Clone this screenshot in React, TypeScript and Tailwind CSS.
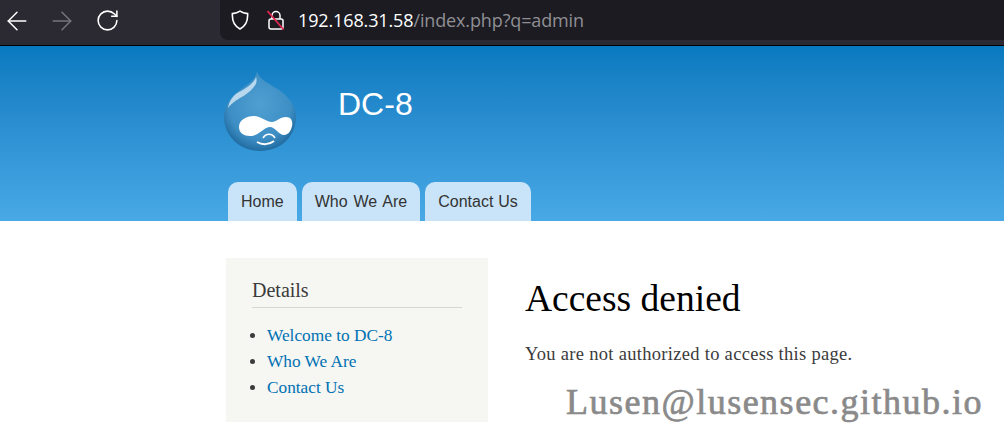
import { ArrowLeft, ArrowRight, RotateCw } from "lucide-react";

const serif = "font-['Liberation_Serif',serif]";

function DrupalLogo() {
  return (
    <svg width="72" height="82" viewBox="0 0 72 82" className="shrink-0">
      <defs>
        <radialGradient id="drop" cx="0.5" cy="0.42" r="0.62">
          <stop offset="0" stopColor="#4f9fd2" />
          <stop offset="0.7" stopColor="#3d8ec4" />
          <stop offset="1" stopColor="#1a6499" />
        </radialGradient>
      </defs>
      <path
        d="M33 1C34 7 40 11 50 17C63 24 72 35 72 47C72 67 56 81 36 81C16 81 0 66 0 47C0 33 10 24 20 17C27 12 32 8 33 1Z"
        fill="url(#drop)"
      />
      <path
        d="M32 7C30 13 23 18 15 22C8 26 5 32 4 38C10 30 18 28 25 22C31 17 34 12 32 7Z"
        fill="#d4e8f5"
        opacity="0.8"
      />
      <path
        d="M15 57C15 50 22 46 30 46C37 46 42 52 48 52C52 52 56 47 62 47C67 47 69 51 68 56C67 61 64 65 60 65C55 65 51 57 46 57C40 57 35 66 26 66C20 66 15 63 15 57Z"
        fill="#ffffff"
      />
      <path d="M39 68C42 63 48 63 51 68" fill="none" stroke="#ffffff" strokeWidth="1.6" />
      <path d="M33 72C38 75 45 75 50 71" fill="none" stroke="#ffffff" strokeWidth="2" />
    </svg>
  );
}

function LockOff() {
  return (
    <svg width="18" height="20" viewBox="0 0 18 20" fill="none">
      <path d="M5 9V5.5a4 4 0 0 1 8 0V9" stroke="#fff" strokeWidth="1.5" />
      <rect x="2" y="9" width="14" height="10" rx="2" stroke="#fff" strokeWidth="1.5" />
      <path d="M0.5 1l16 18.5" stroke="#e22850" strokeWidth="1.7" />
    </svg>
  );
}

function Shield() {
  return (
    <svg width="18" height="20" viewBox="0 0 18 20" fill="none">
      <path
        d="M9 1.2C11 2.6 14 3.4 16.6 3.6C17 10 15 16 9 19C3 16 1 10 1.4 3.6C4 3.4 7 2.6 9 1.2Z"
        stroke="#fff"
        strokeWidth="1.6"
      />
    </svg>
  );
}

export default function App() {
  return (
    <div className="relative h-[430px] w-[1004px] overflow-hidden bg-white font-['Liberation_Sans',sans-serif]">
      {/* browser toolbar */}
      <div className="flex h-[46px] items-start border-b border-black bg-[#2b2a33]">
        <div className="flex h-[41px] w-[220px] items-center pl-[2px]">
          <ArrowLeft size={30} strokeWidth={1.2} className="text-white" />
          <ArrowRight size={30} strokeWidth={1.2} className="ml-[15px] text-[#77767c]" />
          <RotateCw size={25} strokeWidth={1.5} className="ml-[18px] text-white" />
        </div>
        <div className="flex h-[40px] flex-1 items-center rounded-bl-lg bg-[#1c1b22] pl-[11px]">
          <Shield />
          <span className="ml-[18px]">
            <LockOff />
          </span>
          <span className="ml-[13px] font-['Open_Sans',sans-serif] text-[18px] tracking-[-0.13px] text-white">
            192.168.31.58<span className="text-[#8f8f94]">/index.php?q=admin</span>
          </span>
        </div>
      </div>

      {/* site header */}
      <div className="h-[175px] bg-gradient-to-b from-[#0779bf] to-[#48a9e6] pl-[224px]">
        <div className="flex h-[136px] items-start pt-[24px]">
          <DrupalLogo />
          <h2 className="ml-[42px] mt-[14px] text-[32px] leading-10 text-white">DC-8</h2>
        </div>
        <nav className="ml-[4px] flex gap-[5px] text-[16px] text-[#333] [word-spacing:1.5px]">
          <a className="flex h-[39px] items-center rounded-t-[10px] bg-[#c9e4f8] px-[13px]">Home</a>
          <a className="flex h-[39px] items-center rounded-t-[10px] bg-[#c9e4f8] px-[13px]">Who We Are</a>
          <a className="flex h-[39px] items-center rounded-t-[10px] bg-[#c9e4f8] px-[13px] [word-spacing:0.5px]">Contact Us</a>
        </nav>
      </div>

      {/* content */}
      <div className={`flex pl-[226px] pt-[37px] ${serif}`}>
        <aside className="h-[164px] w-[262px] bg-[#f6f6f2] px-[26px] pt-[20px] text-[#3b3b3b]">
          <h3 className="border-b border-[#d6d6d2] pb-[5px] text-[20px] leading-[24px]">Details</h3>
          <ul className="mt-[15px] list-disc pl-[15px] text-[17.3px] leading-[26px] marker:text-[#3b3b3b]">
            <li className="text-[#0071b3]">Welcome to DC-8</li>
            <li className="text-[#0071b3]">Who We Are</li>
            <li className="text-[#0071b3]">Contact Us</li>
          </ul>
        </aside>
        <main className="ml-[37px] pt-[19px]">
          <h1 className="text-[37.5px] leading-[44px] text-black">Access denied</h1>
          <p className="mt-[20px] text-[18.5px] leading-[26px] tracking-[0.3px] text-[#3b3b3b]">You are not authorized to access this page.</p>
        </main>
      </div>

      {/* watermark */}
      <div className={`absolute left-[566px] top-[380px] text-[36px] leading-[44px] tracking-[1.5px] text-[#8a8a8a] [-webkit-text-stroke:0.7px_#8a8a8a] ${serif}`}>
        Lusen@lusensec.github.io
      </div>
    </div>
  );
}
